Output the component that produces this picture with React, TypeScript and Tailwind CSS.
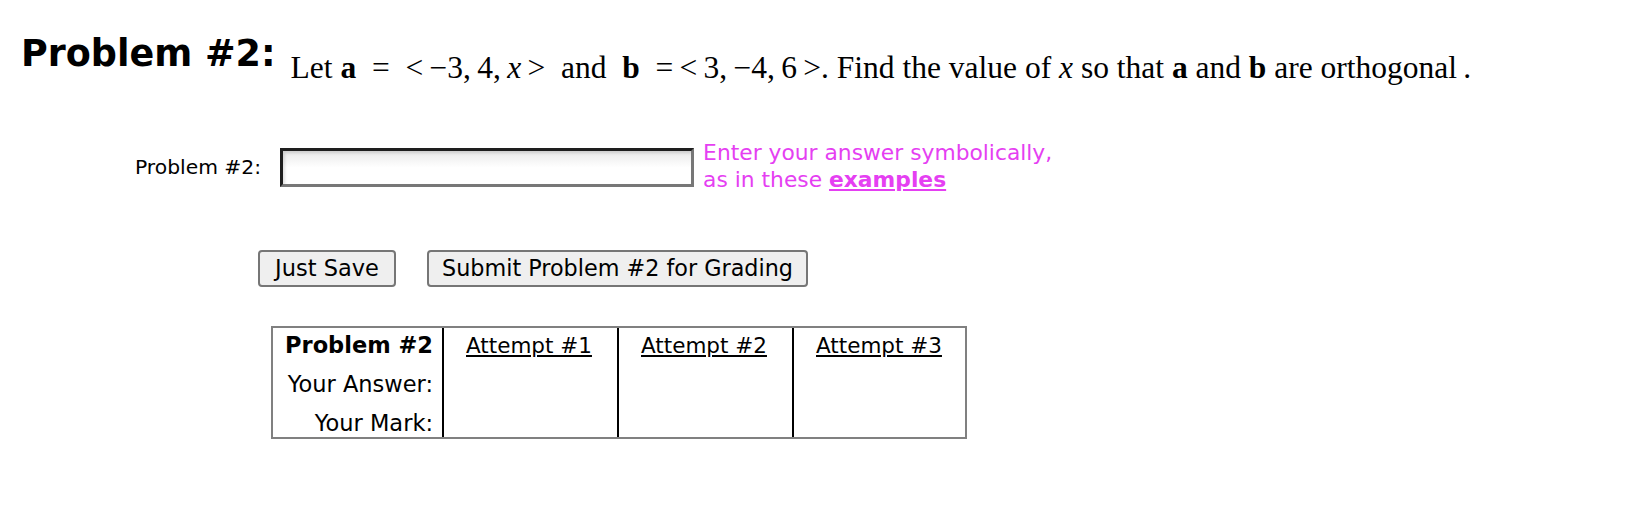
import React from "react";

const sans = { fontFamily: '"DejaVu Sans", Verdana, sans-serif' };

function MathLine() {
  return (
    <div className="font-['Liberation_Serif',serif] text-[31.5px] leading-none text-black whitespace-nowrap">
      Let <b>a</b>&nbsp; = &nbsp;&lt;&thinsp;−3,&thinsp;4,&thinsp;<i>x</i>&thinsp;&gt;&nbsp; and&nbsp; <b>b</b>&nbsp; =&thinsp;&lt;&thinsp;3,&thinsp;−4,&thinsp;6&thinsp;&gt;. Find the value of{" "}
      <i>x</i> so that <b>a</b> and <b>b</b> are orthogonal&thinsp;.
    </div>
  );
}

export default function App() {
  const attempts = ["Attempt #1", "Attempt #2", "Attempt #3"];
  return (
    <div className="w-[1634px] h-[516px] bg-white text-black" style={sans}>
      <div className="flex items-start pl-[21px] pt-[36px]">
        <h2 className="font-['DejaVu_Sans',sans-serif] font-bold text-[36.5px] leading-none">Problem #2:</h2>
        <div className="ml-[15px] mt-[16px]">
          <MathLine />
        </div>
      </div>

      <div className="flex items-center mt-[59px] pl-[135px]">
        <label className="text-[20.3px] leading-none font-['DejaVu_Sans',sans-serif]">Problem #2:</label>
        <div className="ml-[19px] w-[414px] h-[39px] border-[3px] border-t-[#1e1e1e] border-l-[#1e1e1e] border-b-[#777777] border-r-[#777777] bg-gradient-to-b from-[#e9e9e9] via-white to-white shadow-[inset_2px_2px_3px_rgba(0,0,0,0.12)]" />
        <div className="ml-[9px] -mt-[4px] text-[21.8px] leading-[27px] text-[#e53ff2] font-['DejaVu_Sans',sans-serif]">
          <div>Enter your answer symbolically,</div>
          <div>
            as in these <span className="font-bold underline underline-offset-2">examples</span>
          </div>
        </div>
      </div>

      <div className="flex items-center gap-[31px] mt-[57px] pl-[258px]">
        <button className="w-[138px] h-[37px] rounded-[4px] border-2 border-[#767676] bg-[#efefef] text-[22.5px] leading-none font-['DejaVu_Sans',sans-serif]">
          Just Save
        </button>
        <button className="w-[381px] h-[37px] rounded-[4px] border-2 border-[#767676] bg-[#efefef] text-[22.3px] leading-none font-['DejaVu_Sans',sans-serif]">
          Submit Problem #2 for Grading
        </button>
      </div>

      <div className="mt-[39px] ml-[271px] w-[696px] border-2 border-[#808080] font-['DejaVu_Sans',sans-serif] text-[21.5px]">
        <div className="grid grid-cols-[171px_175px_175px_175px] grid-rows-[109px]">
          <div className="border-r-2 border-black">
            <div className="-mt-[2px] flex flex-col items-end pr-[9px] leading-[39px] text-[22.5px]">
              <div className="h-[39px] font-bold">Problem #2</div>
              <div className="h-[39px]">Your Answer:</div>
              <div className="h-[33px]">Your Mark:</div>
            </div>
          </div>
          {attempts.map((a, i) => (
            <div key={a} className={i < 2 ? "border-r-2 border-black" : ""}>
              <div className="-mt-[2px] h-[39px] pl-[22px] leading-[39px]">
                <span className="underline underline-offset-2">{a}</span>
              </div>
            </div>
          ))}
        </div>
      </div>
    </div>
  );
}
